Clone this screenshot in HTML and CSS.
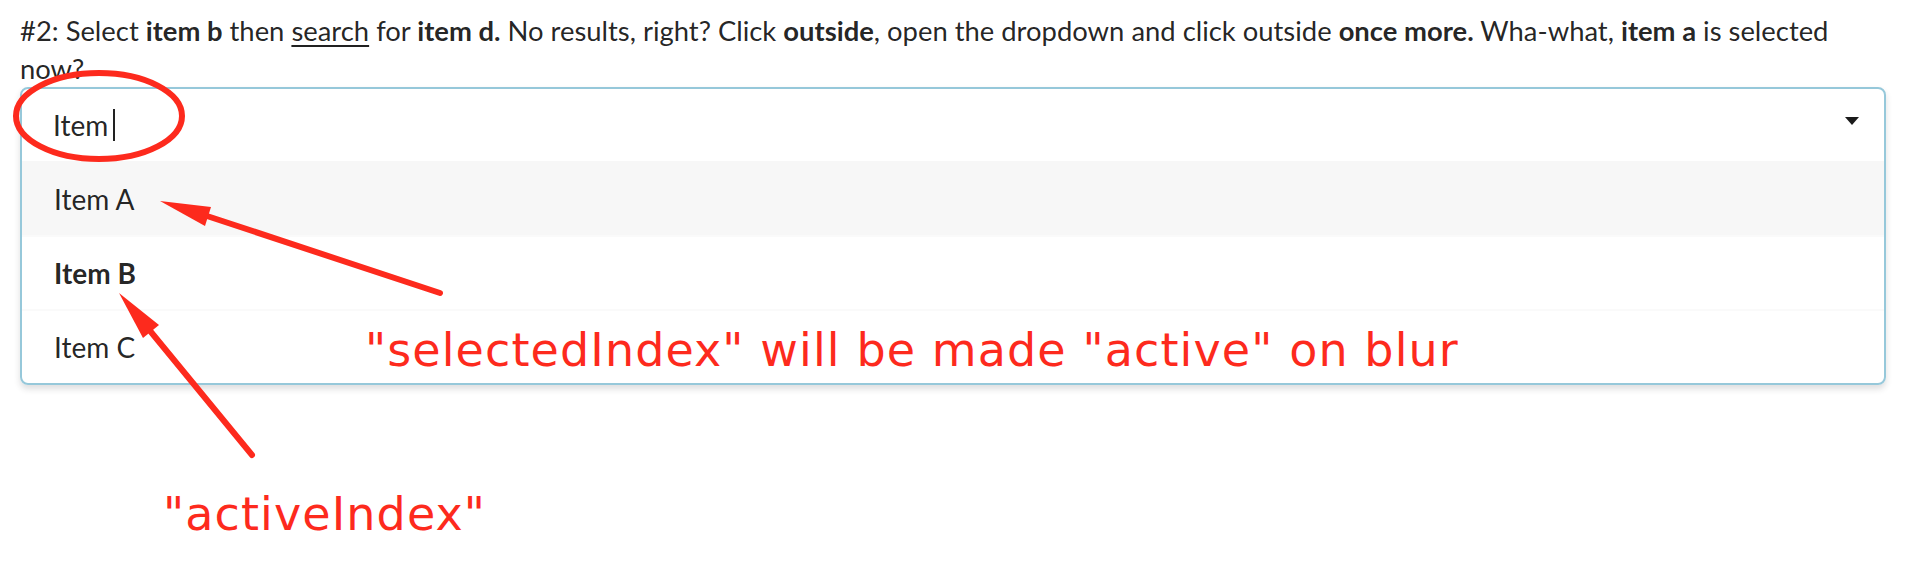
FILE: index.html
```html
<!DOCTYPE html>
<html lang="en">
<head>
    <meta charset="UTF-8">
    <title>Dropdown search bug #2</title>
    <link rel="stylesheet" href="styles.css">
</head>
<body>
    <div class="page">
        <p class="task">#2: Select <b>item b</b> then <u>search</u> for <b>item d.</b> No results, right? Click <b>outside</b>, open the dropdown and click outside <b>once more.</b> Wha-what, <b>item a</b> is selected now?</p>

        <!-- search selection dropdown, open -->
        <div class="dropdown">
            <div class="search-row">
                <span class="query">Item</span><span class="caret"></span>
                <svg class="dropdown-icon" width="14" height="8" viewBox="0 0 14 8"><polygon points="0,0 14,0 7,8" /></svg>
            </div>
            <div class="menu">
                <div class="item active">Item A</div>
                <div class="item selected">Item B</div>
                <div class="item">Item C</div>
            </div>
        </div>
    </div>

    <!-- notes drawn on top -->
    <svg class="notes" width="1928" height="580" viewBox="0 0 1928 580">
        <ellipse cx="99" cy="116" rx="83" ry="43" />
        <line x1="440" y1="293" x2="207" y2="216" />
        <polygon points="160,201 211,207 205,226" />
        <line x1="252" y1="455" x2="151" y2="332" />
        <polygon points="119,293 159,325 143,338" />
        <text x="365" y="366">"selectedIndex" will be made "active" on blur</text>
        <text x="163" y="530">"activeIndex"</text>
    </svg>
</body>
</html>
```

FILE: styles.css
```css
html, body {
    height: 100%;
}
body {
    margin: 0;
    min-height: 580px;
    position: relative;
    overflow: hidden;
    font-family: Lato, "Liberation Sans", sans-serif;
    color: rgba(0, 0, 0, 0.87);
    background: #fff;
}
.page {
    width: 1866px;
    padding: 12px 0 0 20px;
}
.task {
    margin: 0;
    padding-right: 30px;
    font-size: 27.4px;
    line-height: 37.6px;
}
.task b {
    font-weight: 700;
}
.task u {
    text-decoration-thickness: 2px;
    text-underline-offset: 4px;
}
.dropdown {
    box-sizing: border-box;
    border: 2px solid #96c8da;
    border-radius: 8px;
    box-shadow: 0 4px 6px rgba(34, 36, 38, 0.15);
    font-size: 28px;
    line-height: 28px;
    overflow: hidden;
}
.search-row {
    display: flex;
    align-items: center;
    height: 28px;
    padding: 22px 25px 22px 31px;
}
.caret {
    display: inline-block;
    width: 2px;
    height: 32px;
    margin-left: 5px;
    background: #222;
}
.dropdown-icon {
    margin-left: auto;
    margin-bottom: 8px;
    fill: #1b1b1b;
}
.item {
    border-top: 2px solid #fafafa;
    padding: 22px 32px;
}
.item.active {
    background: #f7f7f7;
    border-top-color: #f7f7f7;
}
.item.selected {
    font-weight: 700;
}
.notes {
    position: absolute;
    top: 0;
    left: 0;
    pointer-events: none;
}
.notes ellipse,
.notes line {
    fill: none;
    stroke: #fd2a1d;
    stroke-width: 6;
    stroke-linecap: round;
}
.notes polygon {
    fill: #fd2a1d;
}
.notes text {
    font-family: "DejaVu Sans", Verdana, sans-serif;
    font-size: 46px;
    letter-spacing: 1.1px;
    fill: #fd2a1d;
}
```
